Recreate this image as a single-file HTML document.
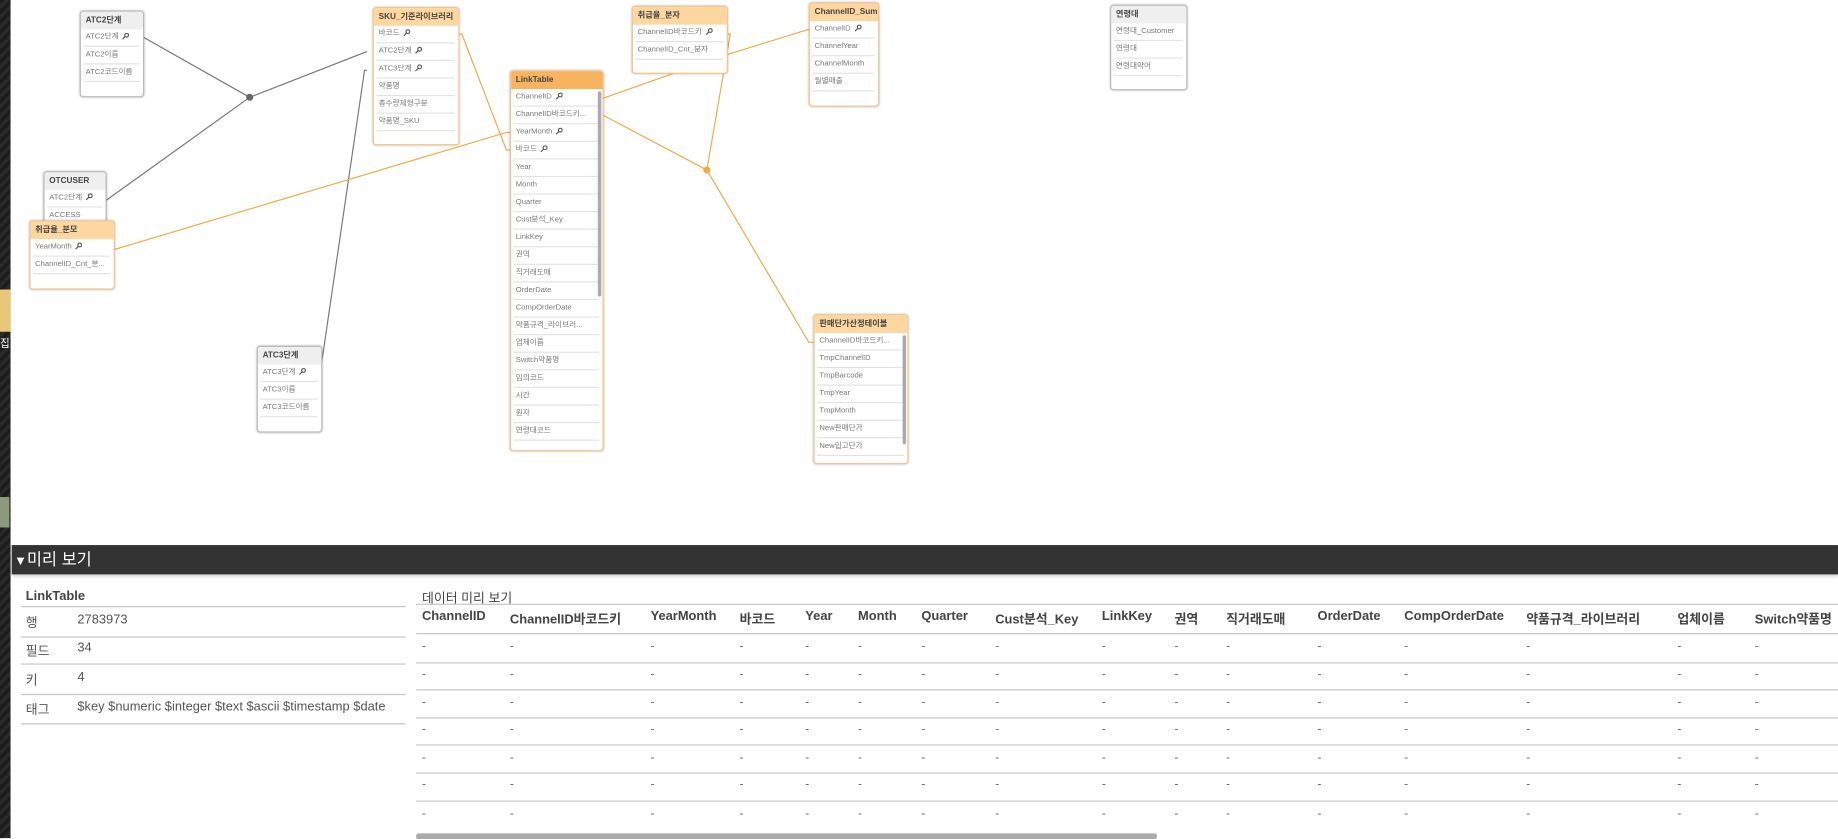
<!DOCTYPE html>
<html><head><meta charset="utf-8"><style>
html,body{margin:0;padding:0;width:1838px;height:838px;overflow:hidden;background:#fff}
#w{position:absolute;left:0;top:0;width:1568px;height:715px;transform:scale(1.17219);transform-origin:0 0;font-family:"Liberation Sans","Noto Sans CJK KR",sans-serif}
.t{position:absolute;background:#fff;border:1px solid #b9b9b9;border-radius:3px;box-shadow:0 0 2px rgba(0,0,0,.25);overflow:hidden}
.t.o{border-color:#f3c58e}
.h{height:15px;line-height:15px;padding-left:4px;font-size:7px;font-weight:bold;color:#444;background:#efefef;white-space:nowrap;overflow:hidden}
.o .h{background:#fdd6a0}
.l .h{background:#f8b35e}
.r{height:14px;line-height:14px;border-bottom:1px solid #e2e2e2;margin:0 3px 0 2px;padding-left:2px;font-size:6.5px;color:#777;white-space:nowrap;overflow:hidden}
.k{display:inline-block;width:6px;height:6px;margin-left:3px;vertical-align:middle}
#bar{position:absolute;left:10px;top:465px;width:1558px;height:25px;background:#333;color:#fff;font-size:14px;line-height:25px;box-shadow:0 2px 3px rgba(0,0,0,.2)}
.s{position:absolute;font-size:11px;color:#555}
.b{font-weight:bold;color:#444}
.ln{position:absolute;height:1px;background:#c4c4c4}
.dr{position:absolute;left:0;width:1568px;font-size:10px;color:#666;height:12px}.dr span{position:absolute}
</style></head><body><div id="w">
<div style="position:absolute;left:0;top:0;width:9px;height:715px;background:repeating-linear-gradient(135deg,#1c1c1c 0 3px,#2a2a2a 3px 6px)"></div>
<div style="position:absolute;left:0;top:247px;width:9px;height:36px;background:#e8c878"></div>
<div style="position:absolute;left:0;top:286px;font-size:9px;color:#fff">집</div>
<div style="position:absolute;left:0;top:424px;width:8px;height:26px;background:#8a9a7a"></div>

<svg style="position:absolute;left:0;top:0" width="1568" height="465">
<g stroke="#777" stroke-width="1" fill="none">
<polyline points="121,31 213,83 313,44"/>
<polyline points="89,172 213,83"/>
<polyline points="273,319 311,60 313,60"/>
</g>
<circle cx="213" cy="83" r="3" fill="#666"/>
<g stroke="#f5a944" stroke-width="1" fill="none">
<polyline points="391,29 394,29 432,128 435,128"/>
<polyline points="97,213 432,113 435,113"/>
<polyline points="514,84 582,60"/>
<polyline points="619,47 690,25"/>
<polyline points="619,29 623,29 603,145"/>
<polyline points="514,98 603,145 690,292 694,292"/>
</g>
<circle cx="603" cy="145" r="3" fill="#f5a944"/>
</svg>

<div class="t" style="left:68px;top:9px;width:53px;height:72px"><div class="h">ATC2단계</div><div class="r">ATC2단계<svg class="k" viewBox="0 0 6 6"><circle cx="4" cy="2" r="1.6" fill="none" stroke="#555"/><path d="M3 3L0.5 5.5" stroke="#555"/></svg></div><div class="r">ATC2이름</div><div class="r">ATC2코드이름</div></div>

<div class="t o" style="left:318px;top:6px;width:72px;height:116px"><div class="h">SKU_기준라이브러리</div><div class="r">바코드<svg class="k" viewBox="0 0 6 6"><circle cx="4" cy="2" r="1.6" fill="none" stroke="#555"/><path d="M3 3L0.5 5.5" stroke="#555"/></svg></div><div class="r">ATC2단계<svg class="k" viewBox="0 0 6 6"><circle cx="4" cy="2" r="1.6" fill="none" stroke="#555"/><path d="M3 3L0.5 5.5" stroke="#555"/></svg></div><div class="r">ATC3단계<svg class="k" viewBox="0 0 6 6"><circle cx="4" cy="2" r="1.6" fill="none" stroke="#555"/><path d="M3 3L0.5 5.5" stroke="#555"/></svg></div><div class="r">약품명</div><div class="r">총수량제형구분</div><div class="r">약품명_SKU</div></div>

<div class="t o l" style="left:435px;top:60px;width:78px;height:323px"><div class="h">LinkTable</div><div class="r">ChannelID<svg class="k" viewBox="0 0 6 6"><circle cx="4" cy="2" r="1.6" fill="none" stroke="#555"/><path d="M3 3L0.5 5.5" stroke="#555"/></svg></div><div class="r">ChannelID바코드키...</div><div class="r">YearMonth<svg class="k" viewBox="0 0 6 6"><circle cx="4" cy="2" r="1.6" fill="none" stroke="#555"/><path d="M3 3L0.5 5.5" stroke="#555"/></svg></div><div class="r">바코드<svg class="k" viewBox="0 0 6 6"><circle cx="4" cy="2" r="1.6" fill="none" stroke="#555"/><path d="M3 3L0.5 5.5" stroke="#555"/></svg></div><div class="r">Year</div><div class="r">Month</div><div class="r">Quarter</div><div class="r">Cust분석_Key</div><div class="r">LinkKey</div><div class="r">권역</div><div class="r">직거래도매</div><div class="r">OrderDate</div><div class="r">CompOrderDate</div><div class="r">약품규격_라이브러...</div><div class="r">업체이름</div><div class="r">Switch약품명</div><div class="r">임의코드</div><div class="r">시간</div><div class="r">원자</div><div class="r">연령대코드</div>
<div style="position:absolute;right:1px;top:17px;width:3px;height:175px;background:#aaa;border-radius:2px"></div></div>

<div class="t o" style="left:539px;top:5px;width:80px;height:56px"><div class="h">취급율_분자</div><div class="r">ChannelID바코드키<svg class="k" viewBox="0 0 6 6"><circle cx="4" cy="2" r="1.6" fill="none" stroke="#555"/><path d="M3 3L0.5 5.5" stroke="#555"/></svg></div><div class="r">ChannelID_Cnt_분자</div></div>

<div class="t o" style="left:690px;top:2px;width:58px;height:87px"><div class="h">ChannelID_Sum</div><div class="r">ChannelID<svg class="k" viewBox="0 0 6 6"><circle cx="4" cy="2" r="1.6" fill="none" stroke="#555"/><path d="M3 3L0.5 5.5" stroke="#555"/></svg></div><div class="r">ChannelYear</div><div class="r">ChannelMonth</div><div class="r">월별매출</div></div>

<div class="t" style="left:947px;top:4px;width:64px;height:71px"><div class="h">연령대</div><div class="r">연령대_Customer</div><div class="r">연령대</div><div class="r">연령대약어</div></div>

<div class="t" style="left:37px;top:146px;width:52px;height:50px"><div class="h">OTCUSER</div><div class="r">ATC2단계<svg class="k" viewBox="0 0 6 6"><circle cx="4" cy="2" r="1.6" fill="none" stroke="#555"/><path d="M3 3L0.5 5.5" stroke="#555"/></svg></div><div class="r">ACCESS</div></div>

<div class="t o" style="left:25px;top:188px;width:71px;height:57px"><div class="h">취급율_분모</div><div class="r">YearMonth<svg class="k" viewBox="0 0 6 6"><circle cx="4" cy="2" r="1.6" fill="none" stroke="#555"/><path d="M3 3L0.5 5.5" stroke="#555"/></svg></div><div class="r">ChannelID_Cnt_분...</div></div>

<div class="t" style="left:219px;top:295px;width:54px;height:72px"><div class="h">ATC3단계</div><div class="r">ATC3단계<svg class="k" viewBox="0 0 6 6"><circle cx="4" cy="2" r="1.6" fill="none" stroke="#555"/><path d="M3 3L0.5 5.5" stroke="#555"/></svg></div><div class="r">ATC3이름</div><div class="r">ATC3코드이름</div></div>

<div class="t o" style="left:694px;top:268px;width:79px;height:126px"><div class="h">판매단가산정테이블</div><div class="r">ChannelID바코드키...</div><div class="r">TmpChannelID</div><div class="r">TmpBarcode</div><div class="r">TmpYear</div><div class="r">TmpMonth</div><div class="r">New판매단가</div><div class="r">New입고단가</div>
<div style="position:absolute;right:1px;top:17px;width:3px;height:93px;background:#aaa;border-radius:2px"></div></div>

<div id="bar"><span style="font-size:11px;margin-left:2px">▼</span>미리 보기</div>

<div class="s b" style="left:22px;top:503px">LinkTable</div>
<div class="ln" style="left:18px;top:517px;width:328px"></div>
<div class="s" style="left:22px;top:523px">행</div><div class="s" style="left:66px;top:523px">2783973</div>
<div class="ln" style="left:18px;top:543px;width:328px"></div>
<div class="s" style="left:22px;top:547px">필드</div><div class="s" style="left:66px;top:547px">34</div>
<div class="ln" style="left:18px;top:566px;width:328px"></div>
<div class="s" style="left:22px;top:572px">키</div><div class="s" style="left:66px;top:572px">4</div>
<div class="ln" style="left:18px;top:592px;width:328px"></div>
<div class="s" style="left:22px;top:597px">태그</div><div class="s" style="left:66px;top:597px">$key $numeric $integer $text $ascii $timestamp $date</div>
<div class="ln" style="left:18px;top:617px;width:328px"></div>

<div class="s" style="left:360px;top:502px;color:#444">데이터 미리 보기</div>
<div class="ln" style="left:355px;top:515px;width:1213px"></div>
<div style="position:absolute;left:0;top:520px;font-size:11px;font-weight:bold;color:#444;white-space:nowrap">
<span style="position:absolute;left:360px">ChannelID</span><span style="position:absolute;left:435px">ChannelID바코드키</span><span style="position:absolute;left:555px">YearMonth</span><span style="position:absolute;left:631px">바코드</span><span style="position:absolute;left:687px">Year</span><span style="position:absolute;left:732px">Month</span><span style="position:absolute;left:786px">Quarter</span><span style="position:absolute;left:849px">Cust분석_Key</span><span style="position:absolute;left:940px">LinkKey</span><span style="position:absolute;left:1002px">권역</span><span style="position:absolute;left:1046px">직거래도매</span><span style="position:absolute;left:1124px">OrderDate</span><span style="position:absolute;left:1198px">CompOrderDate</span><span style="position:absolute;left:1302px">약품규격_라이브러리</span><span style="position:absolute;left:1431px">업체이름</span><span style="position:absolute;left:1497px">Switch약품명</span></div>
<div class="ln" style="left:355px;top:540px;width:1213px"></div>
<div class="ln" style="left:355px;top:565px;width:1213px"></div>
<div class="ln" style="left:355px;top:588px;width:1213px"></div>
<div class="ln" style="left:355px;top:612px;width:1213px"></div>
<div class="ln" style="left:355px;top:635px;width:1213px"></div>
<div class="ln" style="left:355px;top:659px;width:1213px"></div>
<div class="ln" style="left:355px;top:683px;width:1213px"></div>
<div style="position:absolute;left:355px;top:711px;width:632px;height:5px;background:#aaa;border-radius:2px"></div>
<div class="dr" style="top:546px"><span style="left:360px">-</span><span style="left:435px">-</span><span style="left:555px">-</span><span style="left:631px">-</span><span style="left:687px">-</span><span style="left:732px">-</span><span style="left:786px">-</span><span style="left:849px">-</span><span style="left:940px">-</span><span style="left:1002px">-</span><span style="left:1046px">-</span><span style="left:1124px">-</span><span style="left:1198px">-</span><span style="left:1302px">-</span><span style="left:1431px">-</span><span style="left:1497px">-</span></div>
<div class="dr" style="top:570px"><span style="left:360px">-</span><span style="left:435px">-</span><span style="left:555px">-</span><span style="left:631px">-</span><span style="left:687px">-</span><span style="left:732px">-</span><span style="left:786px">-</span><span style="left:849px">-</span><span style="left:940px">-</span><span style="left:1002px">-</span><span style="left:1046px">-</span><span style="left:1124px">-</span><span style="left:1198px">-</span><span style="left:1302px">-</span><span style="left:1431px">-</span><span style="left:1497px">-</span></div>
<div class="dr" style="top:594px"><span style="left:360px">-</span><span style="left:435px">-</span><span style="left:555px">-</span><span style="left:631px">-</span><span style="left:687px">-</span><span style="left:732px">-</span><span style="left:786px">-</span><span style="left:849px">-</span><span style="left:940px">-</span><span style="left:1002px">-</span><span style="left:1046px">-</span><span style="left:1124px">-</span><span style="left:1198px">-</span><span style="left:1302px">-</span><span style="left:1431px">-</span><span style="left:1497px">-</span></div>
<div class="dr" style="top:617px"><span style="left:360px">-</span><span style="left:435px">-</span><span style="left:555px">-</span><span style="left:631px">-</span><span style="left:687px">-</span><span style="left:732px">-</span><span style="left:786px">-</span><span style="left:849px">-</span><span style="left:940px">-</span><span style="left:1002px">-</span><span style="left:1046px">-</span><span style="left:1124px">-</span><span style="left:1198px">-</span><span style="left:1302px">-</span><span style="left:1431px">-</span><span style="left:1497px">-</span></div>
<div class="dr" style="top:641px"><span style="left:360px">-</span><span style="left:435px">-</span><span style="left:555px">-</span><span style="left:631px">-</span><span style="left:687px">-</span><span style="left:732px">-</span><span style="left:786px">-</span><span style="left:849px">-</span><span style="left:940px">-</span><span style="left:1002px">-</span><span style="left:1046px">-</span><span style="left:1124px">-</span><span style="left:1198px">-</span><span style="left:1302px">-</span><span style="left:1431px">-</span><span style="left:1497px">-</span></div>
<div class="dr" style="top:664px"><span style="left:360px">-</span><span style="left:435px">-</span><span style="left:555px">-</span><span style="left:631px">-</span><span style="left:687px">-</span><span style="left:732px">-</span><span style="left:786px">-</span><span style="left:849px">-</span><span style="left:940px">-</span><span style="left:1002px">-</span><span style="left:1046px">-</span><span style="left:1124px">-</span><span style="left:1198px">-</span><span style="left:1302px">-</span><span style="left:1431px">-</span><span style="left:1497px">-</span></div>
<div class="dr" style="top:689px"><span style="left:360px">-</span><span style="left:435px">-</span><span style="left:555px">-</span><span style="left:631px">-</span><span style="left:687px">-</span><span style="left:732px">-</span><span style="left:786px">-</span><span style="left:849px">-</span><span style="left:940px">-</span><span style="left:1002px">-</span><span style="left:1046px">-</span><span style="left:1124px">-</span><span style="left:1198px">-</span><span style="left:1302px">-</span><span style="left:1431px">-</span><span style="left:1497px">-</span></div>
</div></body></html>
